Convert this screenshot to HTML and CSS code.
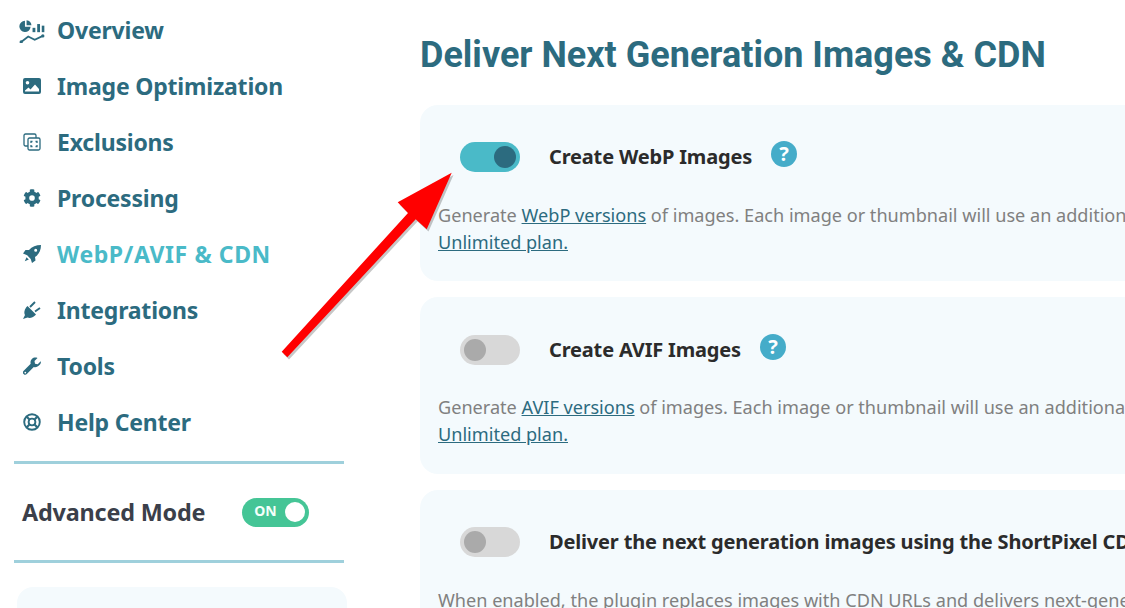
FILE: index.html
```html
<!DOCTYPE html>
<html lang="en">
<head>
<meta charset="utf-8">
<title>Deliver Next Generation Images &amp; CDN</title>
<link rel="stylesheet" href="styles.css">
</head>
<body>
<div class="page">
  <aside class="sidebar">
    <nav class="nav">
      <a class="nav-item"><svg class="nav-icon overview" viewBox="0 0 24 24"><path d="M5.500 3.500a5.200 5.200 0 1 0 5.200 5.600H5.500z"/><path d="M7 3a5 5 0 0 1 4.500 4.500H7z"/><rect x="12.500" y="10" width="2.600" height="4"/><rect x="16.800" y="6.500" width="2.600" height="7.500"/><rect x="21" y="8" width="2.400" height="6"/><path class="line line-mid" d="M2 23 8.500 18l6 3 7.500-3.500"/><circle cx="2" cy="23" r="1.500"/><circle cx="22" cy="17.500" r="1.500"/></svg><span>Overview</span></a>
      <a class="nav-item"><svg class="nav-icon" viewBox="0 0 18 18"><path fill-rule="evenodd" d="M2 1h14a2 2 0 0 1 2 2v12a2 2 0 0 1-2 2H2a2 2 0 0 1-2-2V3a2 2 0 0 1 2-2zm2.500 3a1.800 1.800 0 1 0 0 3.600 1.800 1.800 0 0 0 0-3.600zM2 14.500h14V12l-4-4.500-4.500 5-2-2-3.500 3z"/></svg><span>Image Optimization</span></a>
      <a class="nav-item"><svg class="nav-icon" viewBox="0 0 18 18"><path class="line" d="M5 13H2.500A1.500 1.500 0 0 1 1 11.500v-9A1.500 1.500 0 0 1 2.500 1h9A1.500 1.500 0 0 1 13 2.500V5"/><rect class="line" x="5" y="5" width="12" height="12" rx="1.500"/><path class="line" d="M8 10V8.500h1.500M12.500 8.500H14V10M14 12v1.500h-1.500M9.500 13.500H8V12"/></svg><span>Exclusions</span></a>
      <a class="nav-item"><svg class="nav-icon" viewBox="0 0 512 512"><path d="M487 316l-42-25c4-23 4-47 0-70l42-25c5-3 7-9 6-14-11-35-30-67-54-93-4-4-10-5-15-2l-42 25c-18-15-38-27-60-35V28c0-6-4-11-9-12-37-8-74-8-110 0-5 1-9 6-9 12v49c-22 8-42 20-60 35L92 87c-5-3-11-2-15 2-24 26-43 58-54 93-2 5 1 11 6 14l42 25c-4 23-4 47 0 70l-42 25c-5 3-7 9-6 14 11 35 30 67 54 93 4 4 10 5 15 2l42-25c18 15 38 27 60 35v49c0 6 4 11 9 12 37 8 74 8 110 0 5-1 9-6 9-12v-49c22-8 42-20 60-35l42 25c5 3 11 2 15-2 24-26 43-58 54-93 2-5-1-11-6-14zM256 336a80 80 0 1 1 0-160 80 80 0 0 1 0 160z"/></svg><span>Processing</span></a>
      <a class="nav-item active"><svg class="nav-icon" viewBox="0 0 18 18"><path fill-rule="evenodd" d="M18 0C13 0 9 1.500 6 5H2.500L0 8.500l4.200 1.800L7.700 14 9 18l3.500-2.500-.5-3.500c4-2.500 6-7 6-12zM12.700 6.800a1.500 1.500 0 1 1 0-3 1.500 1.500 0 0 1 0 3z"/><path d="M3.500 12.200 1.800 16.200 5.800 14.500z"/></svg><span>WebP/AVIF &amp; CDN</span></a>
      <a class="nav-item"><svg class="nav-icon" viewBox="0 0 18 18"><path d="M0 18l2-4C.5 11 2 8 3.500 6l1-1 8.500 8.500-1 1c-2 2-5 3-7.500 2z"/><path class="line line-bold" d="M7 6l5-5M12 10.500 17 7"/></svg><span>Integrations</span></a>
      <a class="nav-item"><svg class="nav-icon" viewBox="0 0 18 18"><path fill-rule="evenodd" d="M17.700 4.200l-3 3-2.700-.5-.5-2.700 3-3C12.500.2 10.300.6 8.900 2 7.600 3.300 7.200 5.200 7.700 6.800L.7 13.800a2.200 2.200 0 0 0 3.100 3.300l7-7.100c1.700.5 3.500.1 4.800-1.200 1.500-1.300 2.800-3 2.100-4.600zM2.300 16.500a.9.900 0 1 1 0-1.800.9.900 0 0 1 0 1.800z"/></svg><span>Tools</span></a>
      <a class="nav-item"><svg class="nav-icon" viewBox="0 0 18 18"><circle class="line line-bold" cx="9" cy="9" r="7.800"/><circle class="line line-bold" cx="9" cy="9" r="3.400"/><path class="line line-thick" d="M3.500 3.500l3.200 3.200M14.500 3.500l-3.200 3.200M3.500 14.500l3.200-3.200M14.500 14.500l-3.200-3.200"/></svg><span>Help Center</span></a>
    </nav>
    <div class="mode-row">
      <span class="mode-label">Advanced Mode</span>
      <span class="mode-switch"><span class="mode-on">ON</span><span class="mode-knob"></span></span>
    </div>
    <div class="side-card"></div>
  </aside>
  <main class="content">
    <h1 class="title">Deliver Next Generation Images &amp; CDN</h1>
    <section class="card">
      <div class="card-head">
        <span class="toggle on"><span class="knob"></span></span>
        <h2 class="card-title">Create WebP Images</h2>
        <span class="help">?</span>
      </div>
      <p class="desc">Generate <a>WebP versions</a> of images. Each image or thumbnail will use an additional credit unless you use the<br><a>Unlimited plan.</a></p>
    </section>
    <section class="card card-tall">
      <div class="card-head">
        <span class="toggle"><span class="knob"></span></span>
        <h2 class="card-title">Create AVIF Images</h2>
        <span class="help">?</span>
      </div>
      <p class="desc">Generate <a>AVIF versions</a> of images. Each image or thumbnail will use an additional credit unless you use the<br><a>Unlimited plan.</a></p>
    </section>
    <section class="card">
      <div class="card-head">
        <span class="toggle"><span class="knob"></span></span>
        <h2 class="card-title">Deliver the next generation images using the ShortPixel CDN</h2>
      </div>
      <p class="desc">When enabled, the plugin replaces images with CDN URLs and delivers next-generation formats to supported browsers.</p>
    </section>
  </main>
  <svg class="arrow" viewBox="0 0 1125 608" aria-hidden="true">
    <polygon class="arrow-shadow" points="453.500,175 399.500,204.500 410,215 283.500,354 289,359.500 417.500,221.500 428.500,231.500"/>
    <polygon class="arrow-shape" points="451.700,172.700 397.700,202.300 408,213 281.700,351.700 287.300,357.300 415.700,219.300 426.700,229.300"/>
  </svg>
</div>
</body>
</html>
```
FILE: styles.css
```css
* { box-sizing: border-box; }
html, body { margin: 0; padding: 0; height: 100%; overflow: hidden; background: #fff; }
body { font-family: "Noto Sans", "Open Sans", sans-serif; color: #333; }
.page { position: relative; width: 1125px; height: 608px; overflow: hidden; display: flex; }

.sidebar { width: 420px; flex: none; padding: 2px 0 0 14px; }
.nav { width: 330px; border-bottom: 3px solid #9fd0dc; padding-bottom: 11px; }
.nav-item { display: flex; align-items: center; height: 56px; padding-left: 8px; gap: 15px; color: #2c6b7f; font-size: 23px; font-weight: 700; letter-spacing: -0.2px; }
.nav-item.active { color: #4abac8; letter-spacing: 0.6px; }
.nav-icon { width: 18px; height: 18px; margin: 0 1px; flex: none; fill: #2c6b7f; }
.nav-icon.overview { width: 26px; height: 26px; margin: 0 -3px; }
.line { fill: none; stroke: #2c6b7f; stroke-width: 1.3; }
.line-mid { stroke-width: 1.7; }
.line-bold { stroke-width: 1.9; }
.line-thick { stroke-width: 2.2; }
.mode-row { width: 330px; height: 99px; border-bottom: 3px solid #9fd0dc; display: flex; align-items: center; padding-left: 8px; gap: 37px; }
.mode-label { font-size: 23.4px; font-weight: 700; color: #3b3f4a; letter-spacing: -0.2px; }
.mode-switch { width: 67px; height: 29px; border-radius: 15px; background: #45c596; display: flex; align-items: center; justify-content: space-between; padding: 0 4px 0 12px; }
.mode-on { color: #f4fffb; font-size: 14px; font-weight: 700; margin-top: -3px; }
.mode-knob { width: 20px; height: 20px; border-radius: 50%; background: #fff; }
.side-card { width: 330px; height: 120px; margin: 24px 0 0 3px; border-radius: 16px; background: #f4fafd; }

.content { width: 900px; flex: none; }
.title { margin: 31px 0 0; height: 49px; font-family: Roboto, sans-serif; font-size: 36px; line-height: 49px; font-weight: 700; color: #2c6b7f; white-space: nowrap; }
.card { width: 900px; margin-top: 16px; padding: 37px 0 0 18px; border-radius: 18px; background: #f4fafd; height: 176px; }
.card:first-of-type { margin-top: 25px; }
.card-tall { height: 177px; padding-top: 38px; }
.card-tall .desc { margin-top: 29px; }
.card-head { display: flex; align-items: center; height: 30px; margin-left: 22px; }
.toggle { display: flex; align-items: center; width: 60px; height: 30px; border-radius: 15px; background: #d8d8d8; padding: 0 4px; flex: none; }
.toggle .knob { width: 22px; height: 22px; border-radius: 50%; background: #aaa; }
.toggle.on { background: #4abac8; justify-content: flex-end; }
.toggle.on .knob { background: #2c6b7f; }
.card-title { margin: -2px 0 0 29px; font-size: 20px; font-weight: 700; color: #2b2b2b; white-space: nowrap; letter-spacing: -0.17px; }
.help { width: 26px; height: 26px; margin: -6px 0 0 19px; border-radius: 50%; background: #45acc9; color: #fff; font-size: 20px; font-weight: 700; line-height: 26px; text-align: center; flex: none; }
.desc { margin: 30px 0 0; font-size: 18.13px; line-height: 27px; color: #808080; white-space: nowrap; }
.desc a { color: #2c6b7f; text-decoration: underline; }

.arrow { position: absolute; left: 0; top: 0; width: 1125px; height: 608px; pointer-events: none; }
.arrow-shadow { fill: #000; opacity: 0.22; }
.arrow-shape { fill: #f00; }
```
